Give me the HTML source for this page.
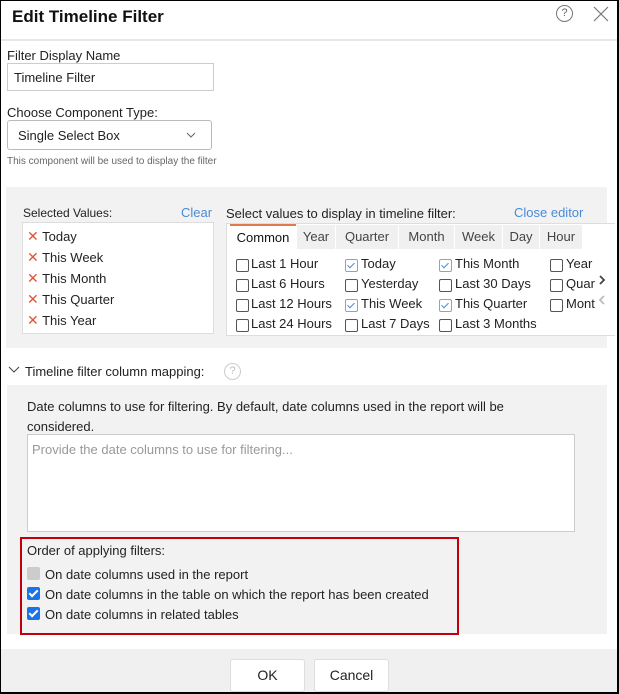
<!DOCTYPE html><html><head><style>
body{margin:0;width:619px;height:694px;position:relative;font-family:"Liberation Sans",sans-serif;font-size:13px;color:#222;overflow:hidden;background:#fff}
.a{position:absolute;white-space:nowrap}
.cb{position:absolute;width:11px;height:11px;border:1px solid #555;border-radius:2px;background:#fff}
.ck{border-color:#7aa7e0;background:#fff}
.ck::after{content:"";position:absolute;left:3px;top:1px;width:3px;height:6px;border:solid #4a8ad8;border-width:0 1.5px 1.5px 0;transform:rotate(45deg)}
.bk{background:#1a73e8;border-color:#1a73e8}
.bk::after{content:"";position:absolute;left:3px;top:0px;width:3px;height:7px;border:solid #fff;border-width:0 2px 2px 0;transform:rotate(45deg)}
.x{color:#e0553a;font-size:14px}
.tab{position:absolute;top:225px;height:24px;line-height:24px;background:#f0f0f0;color:#444;text-align:center;border-right:1px solid #fff}
</style></head><body>
<div style="position:absolute;inset:0;border:1px solid #000;border-bottom-width:2px;border-right-width:2px;pointer-events:none;z-index:9"></div>
<div class="a" style="left:12px;top:7px;font-size:17px;font-weight:bold;color:#111">Edit Timeline Filter</div>
<div class="a" style="left:556px;top:5px;width:15px;height:15px;border:1px solid #777;border-radius:50%;font-size:11px;text-align:center;line-height:15px;color:#666">?</div>
<svg class="a" style="left:593px;top:6px" width="16" height="16"><path d="M1 1L15 15M15 1L1 15" stroke="#777" stroke-width="1.2"/></svg>
<div class="a" style="left:0;top:39px;width:619px;height:2px;background:#e8e8e8"></div>
<div class="a" style="left:7px;top:48px">Filter Display Name</div>
<div class="a" style="left:7px;top:63px;width:207px;height:28px;border:1px solid #ccc;line-height:28px;padding-left:6px;box-sizing:border-box">Timeline Filter</div>
<div class="a" style="left:7px;top:105px">Choose Component Type:</div>
<div class="a" style="left:7px;top:120px;width:205px;height:30px;border:1px solid #bbb;border-radius:3px;line-height:30px;padding-left:10px;box-sizing:border-box">Single Select Box</div>
<svg class="a" style="left:186px;top:132px" width="10" height="6"><path d="M1 1L5 5L9 1" stroke="#666" fill="none"/></svg>
<div class="a" style="left:7px;top:156px;font-size:10px;color:#666">This component will be used to display the filter</div>

<div class="a" style="left:6px;top:187px;width:601px;height:161px;background:#f2f2f2"></div>
<div class="a" style="left:23px;top:206px;font-size:12px">Selected Values:</div>
<div class="a" style="left:181px;top:205px;color:#4a8ad8;font-size:13px">Clear</div>
<div class="a" style="left:22px;top:222px;width:190px;height:110px;background:#fff;border:1px solid #ddd"></div>
<div class="a" style="left:27px;top:226px;line-height:20px"><span class="x">✕</span> Today<br><span class="x">✕</span> This Week<br><span class="x">✕</span> This Month<br><span class="x">✕</span> This Quarter<br><span class="x">✕</span> This Year</div>
<div class="a" style="left:226px;top:206px">Select values to display in timeline filter:</div>
<div class="a" style="left:514px;top:205px;color:#4a8ad8">Close editor</div>
<div class="a" style="left:226px;top:223px;width:388px;height:111px;background:#fff;border:1px solid #ddd;border-right:none"></div>
<div class="a" style="left:230px;top:224px;width:66px;height:2px;background:#e07a4a"></div>
<div class="tab" style="left:230px;width:66px;background:#fff;color:#111;top:226px">Common</div>
<div class="tab" style="left:297px;width:38px">Year</div>
<div class="tab" style="left:336px;width:62px">Quarter</div>
<div class="tab" style="left:399px;width:55px">Month</div>
<div class="tab" style="left:455px;width:47px">Week</div>
<div class="tab" style="left:503px;width:36px">Day</div>
<div class="tab" style="left:540px;width:42px">Hour</div>
<div class="a" style="left:236px;top:254px;line-height:20px;padding-left:15px">Last 1 Hour<br>Last 6 Hours<br>Last 12 Hours<br>Last 24 Hours</div>
<div class="a" style="left:345px;top:254px;line-height:20px;padding-left:16px">Today<br>Yesterday<br>This Week<br>Last 7 Days</div>
<div class="a" style="left:439px;top:254px;line-height:20px;padding-left:16px">This Month<br>Last 30 Days<br>This Quarter<br>Last 3 Months</div>
<div class="a" style="left:550px;top:254px;line-height:20px;padding-left:16px;width:29px;overflow:hidden">Year<br>Quarter<br>Month</div>
<div class="cb" style="left:236px;top:259px"></div><div class="cb" style="left:236px;top:279px"></div><div class="cb" style="left:236px;top:299px"></div><div class="cb" style="left:236px;top:319px"></div>
<div class="cb ck" style="left:345px;top:259px"></div><div class="cb" style="left:345px;top:279px"></div><div class="cb ck" style="left:345px;top:299px"></div><div class="cb" style="left:345px;top:319px"></div>
<div class="cb ck" style="left:439px;top:259px"></div><div class="cb" style="left:439px;top:279px"></div><div class="cb ck" style="left:439px;top:299px"></div><div class="cb" style="left:439px;top:319px"></div>
<div class="cb" style="left:550px;top:259px"></div><div class="cb" style="left:550px;top:279px"></div><div class="cb" style="left:550px;top:299px"></div>
<svg class="a" style="left:598px;top:275px" width="8" height="30"><path d="M2 1L6 5L2 9" stroke="#444" stroke-width="1.8" fill="none"/><path d="M6 21L2 25L6 29" stroke="#bbb" stroke-width="1.8" fill="none"/></svg>

<svg class="a" style="left:8px;top:366px" width="12" height="8"><path d="M1 1L6 6L11 1" stroke="#444" fill="none"/></svg>
<div class="a" style="left:25px;top:364px">Timeline filter column mapping:</div>
<div class="a" style="left:224px;top:363px;width:15px;height:15px;border:1px solid #ccc;border-radius:50%;font-size:11px;text-align:center;line-height:15px;color:#bbb">?</div>

<div class="a" style="left:7px;top:385px;width:600px;height:249px;background:#f2f2f2"></div>
<div class="a" style="left:27px;top:397px;line-height:20px">Date columns to use for filtering. By default, date columns used in the report will be<br>considered.</div>
<div class="a" style="left:27px;top:434px;width:548px;height:98px;background:#fff;border:1px solid #ccc;box-sizing:border-box;padding:7px 4px;color:#999">Provide the date columns to use for filtering...</div>
<div class="a" style="left:20px;top:537px;width:439px;height:98px;border:2px solid #c0000c;box-sizing:border-box"></div>
<div class="a" style="left:27px;top:543px">Order of applying filters:</div>
<div class="cb" style="left:27px;top:567px;background:#ccc;border-color:#ccc"></div>
<div class="a" style="left:45px;top:567px">On date columns used in the report</div>
<div class="cb bk" style="left:27px;top:587px"></div>
<div class="a" style="left:45px;top:587px">On date columns in the table on which the report has been created</div>
<div class="cb bk" style="left:27px;top:607px"></div>
<div class="a" style="left:45px;top:607px">On date columns in related tables</div>

<div class="a" style="left:0;top:649px;width:619px;height:45px;background:#f0f0f0"></div>
<div class="a" style="left:230px;top:659px;width:73px;height:31px;background:#fff;border:1px solid #ddd;border-radius:3px;text-align:center;line-height:31px;font-size:14px">OK</div>
<div class="a" style="left:314px;top:659px;width:73px;height:31px;background:#fff;border:1px solid #ddd;border-radius:3px;text-align:center;line-height:31px;font-size:14px">Cancel</div>
</body></html>
